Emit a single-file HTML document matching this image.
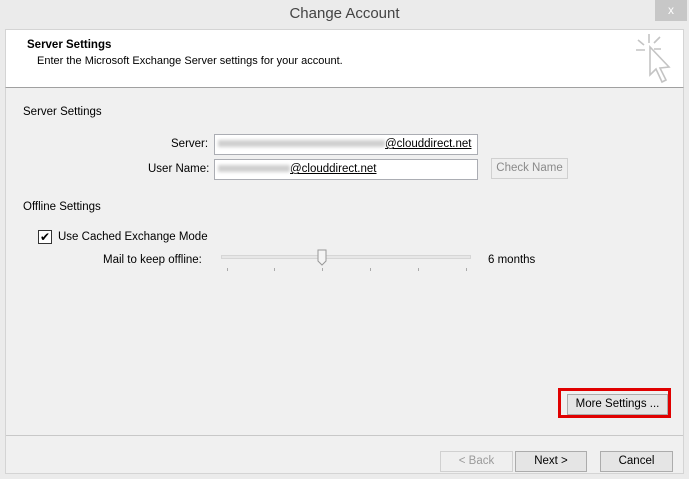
<!DOCTYPE html><html><head><style>
*{margin:0;padding:0;box-sizing:border-box}
body{width:689px;height:479px;background:#ebebeb;font-family:"Liberation Sans",sans-serif;font-size:11px;color:#000;position:relative;overflow:hidden}
.a{position:absolute}
.btn{position:absolute;background:#e5e5e5;border:1px solid #acacac;text-align:center;line-height:19px;font-size:11.5px}
.inp{position:absolute;background:#fff;border:1px solid #abadb3;height:21px;line-height:19px;padding-left:3px;font-size:11.5px}
.blur{display:inline-block;height:7px;background:#cfcfcf;vertical-align:middle;filter:blur(1.5px)}
u{text-decoration:underline}
</style></head><body>
<div class="a" style="left:0;width:689px;text-align:center;top:5px;font-size:15px;color:#444">Change Account</div>
<div class="a" style="left:655px;top:0;width:32px;height:21px;background:#c7c7c7;color:#fff;text-align:center;line-height:20px;font-size:12px">x</div>
<div class="a" style="left:5px;top:29px;width:679px;height:445px;background:#f0f0f0;border:1px solid #d4d4d4"></div>
<div class="a" style="left:5px;top:29px;width:679px;height:59px;background:#fff;border:1px solid #d4d4d4;border-bottom:1px solid #a0a0a0"></div>
<div class="a" style="left:27px;top:39px;font-weight:bold;font-size:11.5px">Server Settings</div>
<div class="a" style="left:37px;top:55px;font-size:11px">Enter the Microsoft Exchange Server settings for your account.</div>
<svg class="a" style="left:634px;top:32px" width="40" height="52"><g stroke="#c4c4c4" stroke-width="1.6" fill="none"><path d="M15 2v9M4 8l6 5M2 18h9M26 5l-6 6M27 17l-7 0"/><path d="M16 15v28l6-6 6 13 4-2-6-12 9-1z" fill="#fff"/></g></svg>
<div class="a" style="left:23px;top:106px;font-size:11.5px">Server Settings</div>
<div class="a" style="left:171px;top:138px;font-size:11.5px">Server:</div>
<div class="inp" style="left:214px;top:134px;width:264px"><span class="blur" style="width:167px"></span><u>@clouddirect.net</u></div>
<div class="a" style="left:148px;top:163px;font-size:11.5px">User Name:</div>
<div class="inp" style="left:214px;top:159px;width:264px"><span class="blur" style="width:72px"></span><u>@clouddirect.net</u></div>
<div class="btn" style="left:491px;top:158px;width:77px;height:21px;color:#8a8a8a;background:#efefef;border-color:#d0d0d0">Check Name</div>
<div class="a" style="left:23px;top:201px;font-size:11.5px">Offline Settings</div>
<div class="a" style="left:38px;top:230px;width:14px;height:14px;border:1px solid #333;background:#fff;font-size:12px;line-height:12px;text-align:center">✔</div>
<div class="a" style="left:58px;top:231px;font-size:11.5px">Use Cached Exchange Mode</div>
<div class="a" style="left:103px;top:254px;font-size:11.5px">Mail to keep offline:</div>
<div class="a" style="left:221px;top:255px;width:250px;height:4px;background:#e7e7e7;border:1px solid #d6d6d6"></div>
<svg class="a" style="left:317px;top:249px" width="12" height="18"><path d="M1 1h8v11l-4 4-4-4z" fill="#f4f4f4" stroke="#999"/></svg>
<div class="a" style="left:227px;top:268px;width:240px;height:3px;border-left:1px solid #aaa;border-right:1px solid #aaa"></div>
<div class="a" style="left:274px;top:268px;width:1px;height:3px;background:#aaa"></div>
<div class="a" style="left:322px;top:268px;width:1px;height:3px;background:#aaa"></div>
<div class="a" style="left:370px;top:268px;width:1px;height:3px;background:#aaa"></div>
<div class="a" style="left:418px;top:268px;width:1px;height:3px;background:#aaa"></div>
<div class="a" style="left:488px;top:254px;font-size:11.5px">6 months</div>
<div class="a" style="left:558px;top:388px;width:113px;height:30px;border:3px solid #e00000"></div>
<div class="btn" style="left:567px;top:394px;width:101px;height:21px">More Settings ...</div>
<div class="a" style="left:6px;top:435px;width:677px;height:1px;background:#c8c8c8"></div>
<div class="btn" style="left:440px;top:451px;width:73px;height:21px;color:#9a9a9a;background:#efefef;border-color:#d0d0d0">&lt; Back</div>
<div class="btn" style="left:515px;top:451px;width:72px;height:21px">Next &gt;</div>
<div class="btn" style="left:600px;top:451px;width:73px;height:21px">Cancel</div>
</body></html>
